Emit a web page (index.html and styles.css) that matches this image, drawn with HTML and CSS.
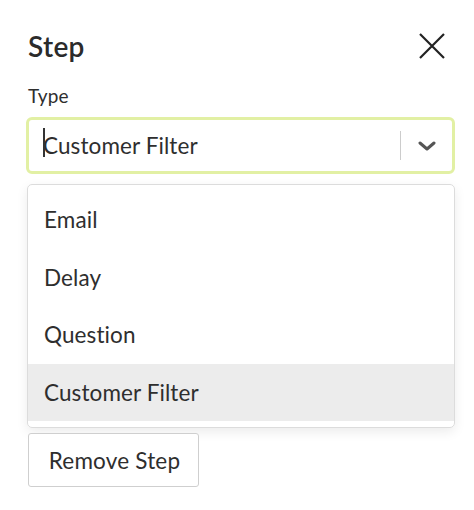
FILE: index.html
```html
<!DOCTYPE html>
<html>
<head>
<meta charset="utf-8">
<link rel="stylesheet" href="styles.css">
</head>
<body>
<div class="panel">
  <div class="header">
    <h1 class="title">Step</h1>
    <button class="close" aria-label="Close">
      <svg width="26" height="26" viewBox="0 0 26 26"><path d="M1 1 L25 25 M25 1 L1 25" stroke="#222" stroke-width="2.2" fill="none"/></svg>
    </button>
  </div>
  <div class="label">Type</div>
  <div class="select">
    <div class="value"><span class="caret"></span>Customer Filter</div>
    <span class="sep"></span>
    <span class="chev">
      <svg width="18" height="10" viewBox="0 0 18 10"><path d="M2 2 L9 8 L16 2" stroke="#555" stroke-width="3" fill="none" stroke-linecap="round" stroke-linejoin="round"/></svg>
    </span>
  </div>
  <div class="menu">
    <div class="item">Email</div>
    <div class="item">Delay</div>
    <div class="item">Question</div>
    <div class="item active">Customer Filter</div>
  </div>
  <button class="btn">Remove Step</button>
</div>
</body>
</html>
```
FILE: styles.css
```css
* { box-sizing: border-box; }
body {
  margin: 0;
  background: #fff;
  font-family: Lato, "Open Sans", sans-serif;
  color: #2e2e2e;
}
.panel {
  padding: 26px 19px 0 28px;
}
.header {
  display: flex;
  justify-content: space-between;
  align-items: center;
  height: 40px;
}
.title {
  margin: 0;
  font-size: 28px;
  font-weight: 600;
  letter-spacing: 0.3px;
  color: #2b2b2b;
}
.close {
  border: 0;
  background: none;
  padding: 0;
  margin-right: 10px;
  width: 26px;
  height: 26px;
}
.label {
  margin-top: 18px;
  font-size: 19px;
  line-height: 24px;
  letter-spacing: 0.2px;
}
.select {
  margin-top: 9px;
  margin-left: -2px;
  height: 57px;
  border: 3px solid #e2f0a4;
  border-radius: 6px;
  display: flex;
  align-items: center;
}
.value {
  flex: 1;
  font-size: 22.5px;
  letter-spacing: 0.1px;
  padding-left: 14px;
  display: flex;
  align-items: center;
  position: relative;
}
.caret {
  position: absolute;
  left: 14px;
  top: -4px;
  width: 1.5px;
  height: 29px;
  background: #333;
}
.sep {
  width: 1px;
  height: 29px;
  background: #ccc;
}
.chev {
  width: 51px;
  display: flex;
  justify-content: center;
}
.menu {
  margin-top: 10px;
  margin-left: -1px;
  border: 1px solid #dcdcdc;
  border-radius: 5px;
  box-shadow: 0 4px 12px rgba(0,0,0,0.08);
  padding: 6px 0;
}
.item {
  height: 57.5px;
  padding-left: 16px;
  display: flex;
  align-items: center;
  font-size: 22.5px;
  letter-spacing: 0.1px;
}
.item.active {
  background: #ececec;
}
.btn {
  margin-top: 5px;
  width: 171px;
  height: 54px;
  border: 1px solid #cfcfcf;
  border-radius: 3px;
  background: #fff;
  font-family: inherit;
  font-size: 22.5px;
  letter-spacing: 0.2px;
  color: #2e2e2e;
  padding: 0 0 0 2px;
}
```
